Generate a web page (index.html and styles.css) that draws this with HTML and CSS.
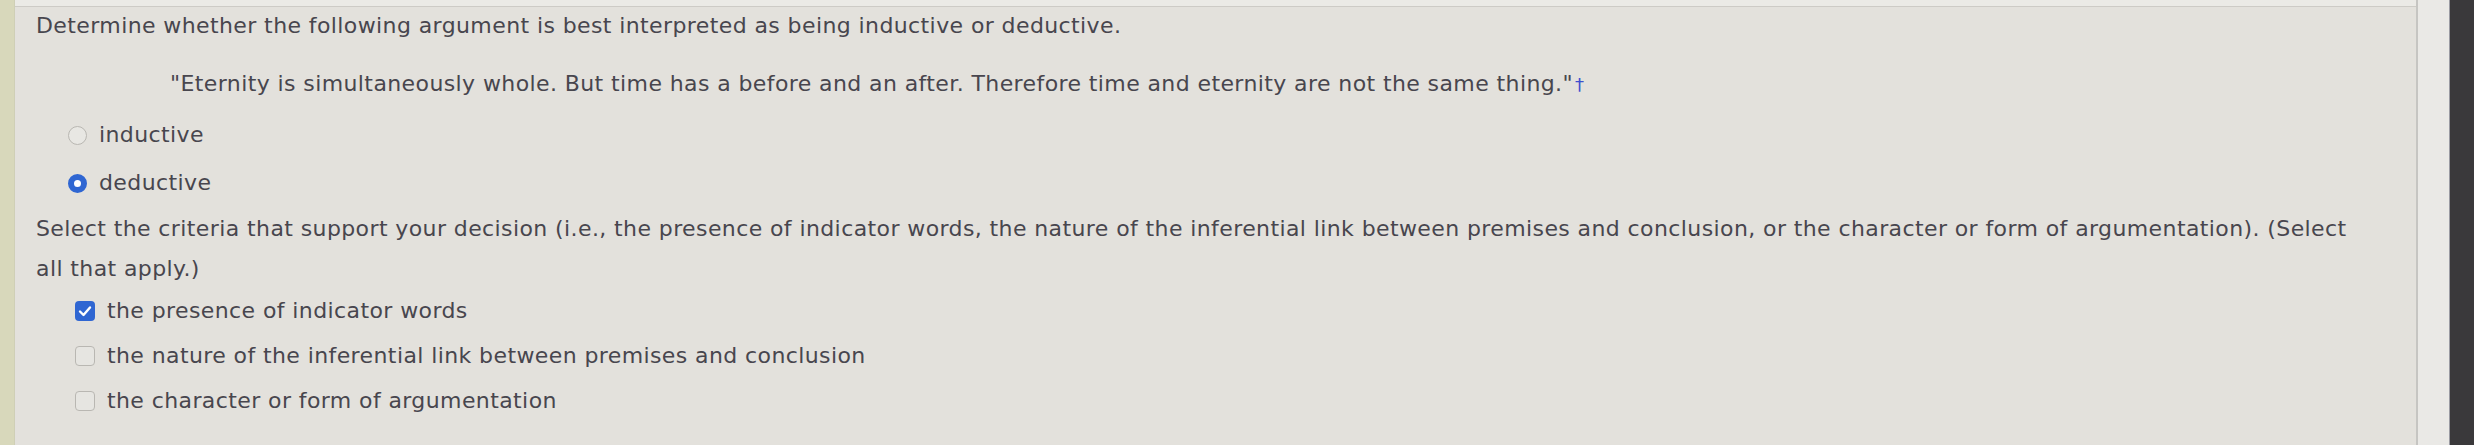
FILE: index.html
```html
<!DOCTYPE html>
<html lang="en">
<head>
<meta charset="utf-8">
<title>Argument question</title>
<link rel="stylesheet" href="styles.css">
</head>
<body>
<div class="frame">
  <div class="strip"></div>
  <div class="main">
    <div class="topband"></div>
    <div class="content">
      <p class="prompt">Determine whether the following argument is best interpreted as being inductive or deductive.</p>
      <p class="quote">"Eternity is simultaneously whole. But time has a before and an after. Therefore time and eternity are not the same thing."<span class="dagger">†</span></p>
      <ul class="choices radios">
        <li><span class="radio"></span>inductive</li>
        <li><span class="radio on"></span>deductive</li>
      </ul>
      <p class="prompt2">Select the criteria that support your decision (i.e., the presence of indicator words, the nature of the inferential link between premises and conclusion, or the character or form of argumentation). (Select all that apply.)</p>
      <ul class="choices checks">
        <li><span class="check on"><svg viewBox="0 0 20 20" width="20" height="20"><path d="M5 10.5 L8.5 14 L15 6.5" fill="none" stroke="#fff" stroke-width="2.4" stroke-linecap="round" stroke-linejoin="round"/></svg></span>the presence of indicator words</li>
        <li><span class="check"></span>the nature of the inferential link between premises and conclusion</li>
        <li><span class="check"></span>the character or form of argumentation</li>
      </ul>
    </div>
  </div>
  <div class="gutter"></div>
  <div class="bezel"></div>
</div>
</body>
</html>
```
FILE: styles.css
```css
html, body {
  margin: 0;
  padding: 0;
}
body {
  background: #3a393b;
  font-family: "DejaVu Sans", Verdana, sans-serif;
  color: #48464e;
  font-size: 22px;
  letter-spacing: 0.4px;
}
.frame {
  display: flex;
  height: 445px;
  overflow: hidden;
}
.strip {
  width: 14px;
  background: #d8d8bb;
  border-right: 1px solid #cfcfb6;
}
.main {
  flex: 1;
  display: flex;
  flex-direction: column;
  background: #e3e1dc;
}
.topband {
  height: 6px;
  background: #ebeae6;
  border-bottom: 1px solid #cdcbc6;
}
.content {
  flex: 1;
  padding: 4px 60px 0 21px;
}
p {
  margin: 0;
}
.prompt {
  line-height: 30px;
}
.quote {
  line-height: 30px;
  margin-top: 28px;
  padding-left: 134px;
}
.dagger {
  color: #3d4fcf;
  font-size: 18px;
  margin-left: 2px;
}
.choices {
  list-style: none;
  margin: 0;
  padding: 0;
  display: flex;
  flex-direction: column;
}
.choices li {
  display: flex;
  align-items: center;
  line-height: 30px;
}
.radios {
  margin-top: 20px;
  gap: 18px;
  padding-left: 32px;
}
.radio {
  width: 19px;
  height: 19px;
  box-sizing: border-box;
  border-radius: 50%;
  border: 1.5px solid #b9b7b2;
  background: #e8e7e3;
  margin-right: 12px;
  flex: none;
}
.radio.on {
  border: 6px solid #2f66d2;
  background: #ffffff;
}
.prompt2 {
  margin-top: 11px;
  line-height: 40px;
}
.checks {
  margin-top: 7px;
  gap: 15px;
  padding-left: 39px;
}
.check {
  width: 20px;
  height: 20px;
  box-sizing: border-box;
  border-radius: 4px;
  border: 1.5px solid #b9b7b2;
  background: #e6e5e1;
  margin-right: 12px;
  flex: none;
  display: flex;
}
.check.on {
  border: none;
  background: #2f66d2;
}
.gutter {
  width: 31px;
  background: #eae9e6;
  border-left: 2px solid #c6c5c2;
}
.bezel {
  width: 24px;
  background: #3a393b;
  border-left: 1px solid #9a9ba3;
}
```
